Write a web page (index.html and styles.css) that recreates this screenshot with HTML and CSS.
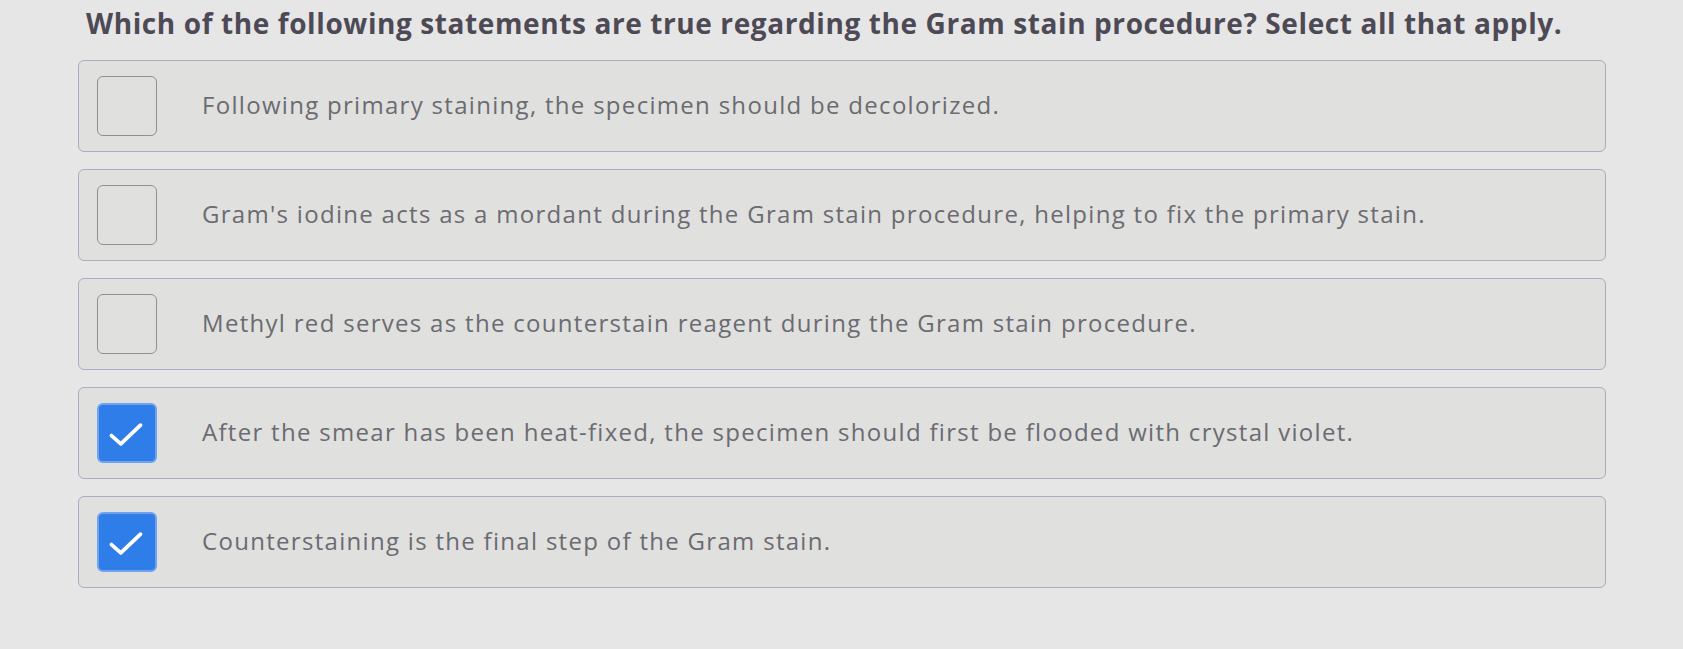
FILE: index.html
```html
<!DOCTYPE html>
<html lang="en">
<head>
<meta charset="utf-8">
<title>Gram stain question</title>
<link rel="stylesheet" href="styles.css">
</head>
<body>
<main class="quiz">
  <h1 class="question">Which of the following statements are true regarding the Gram stain procedure? Select all that apply.</h1>
  <ul class="options">
    <li class="option">
      <span class="box"></span>
      <span class="label">Following primary staining, the specimen should be decolorized.</span>
    </li>
    <li class="option">
      <span class="box"></span>
      <span class="label">Gram's iodine acts as a mordant during the Gram stain procedure, helping to fix the primary stain.</span>
    </li>
    <li class="option">
      <span class="box"></span>
      <span class="label">Methyl red serves as the counterstain reagent during the Gram stain procedure.</span>
    </li>
    <li class="option">
      <span class="box checked"><svg class="tick" viewBox="0 0 36 26" width="38" height="27"><path d="M4 14l9 8L32 4" fill="none" stroke="#fff" stroke-width="3.6" stroke-linecap="round" stroke-linejoin="round"/></svg></span>
      <span class="label">After the smear has been heat-fixed, the specimen should first be flooded with crystal violet.</span>
    </li>
    <li class="option">
      <span class="box checked"><svg class="tick" viewBox="0 0 36 26" width="38" height="27"><path d="M4 14l9 8L32 4" fill="none" stroke="#fff" stroke-width="3.6" stroke-linecap="round" stroke-linejoin="round"/></svg></span>
      <span class="label">Counterstaining is the final step of the Gram stain.</span>
    </li>
  </ul>
</main>
</body>
</html>
```
FILE: styles.css
```css
html, body {
  margin: 0;
  padding: 0;
}
body {
  background: #e7e6e6;
  font-family: "Open Sans", "Noto Sans", sans-serif;
  width: 1683px;
  height: 649px;
  overflow: hidden;
}
.quiz {
  padding: 4px 0 0 78px;
  width: 1528px;
}
.question {
  margin: 0 0 0 8px;
  font-size: 28px;
  line-height: 38px;
  font-weight: 700;
  color: #4d4a55;
  letter-spacing: 0.6px;
  white-space: nowrap;
}
.options {
  list-style: none;
  margin: 18px 0 0 0;
  padding: 0;
  display: flex;
  flex-direction: column;
  gap: 17px;
}
.option {
  height: 92px;
  box-sizing: border-box;
  border: 1.5px solid #a6aec0;
  border-radius: 6px;
  background: #e0e0df;
  display: flex;
  align-items: center;
  padding-left: 18px;
}
.box {
  flex: none;
  width: 60px;
  height: 60px;
  box-sizing: border-box;
  border: 1.5px solid #8e9098;
  border-radius: 6px;
  display: flex;
  align-items: center;
  justify-content: center;
}
.box.checked {
  background: #2f7de8;
  border: 2px solid #6fa3ee;
}
.tick {
  margin-top: 2px;
  margin-right: 2px;
}
.label {
  margin-left: 45px;
  margin-bottom: 3px;
  font-size: 24px;
  letter-spacing: 1.3px;
  color: #6b6b71;
  white-space: nowrap;
}
```
